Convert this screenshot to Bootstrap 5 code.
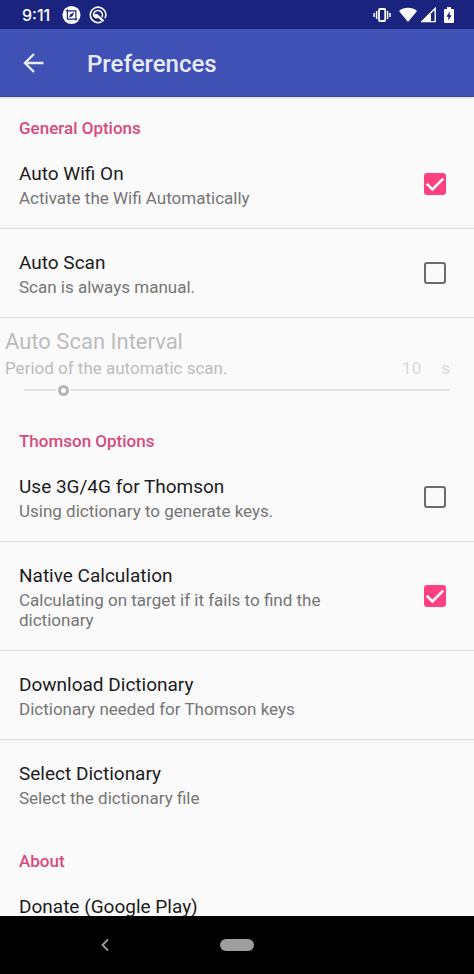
<!DOCTYPE html>
<html lang="en">
<head>
<meta charset="utf-8">
<meta name="viewport" content="width=device-width, initial-scale=1">
<title>Preferences</title>
<link href="https://cdn.jsdelivr.net/npm/bootstrap@5.3.0/dist/css/bootstrap.min.css" rel="stylesheet">
<style>
  body { font-family: Roboto, sans-serif; background: #fafafa; color: #1c1c1c; }
  svg { display: block; }
  .status-bar { background: #1a237e; height: 29px; padding: 0 20px 0 22px; color: #fff; }
  .clock { font: 500 16px/30px Inter, sans-serif; }
  .app-bar { background: #3f51b5; height: 68px; padding: 0 20px; gap: 40px; color: #e8eaf6; border-bottom: 1px solid #3547a3; box-shadow: 0 1px 2px #0002; z-index: 1; }
  .app-title { font-size: 24px; font-weight: 500; line-height: 28px; padding-top: 2px; }
  .prefs { overflow-y: auto; scrollbar-width: none; min-height: 0; }
  .prefs::-webkit-scrollbar { display: none; }
  section + section { padding-top: 2px; }
  .section-title { font-size: 17px; font-weight: 500; line-height: 20px; color: #d84a80; padding: 21px 19px 2px; }
  .pref { padding: 20px 28px 20px 19px; min-height: 88px; gap: 72px; color: inherit; text-align: left; }
  .pref + .pref { border-top: 1px solid #dcdcdc !important; min-height: 89px; }
  .pref-title { font-size: 19px; line-height: 28px; }
  .pref-note { font-size: 17px; line-height: 20px; color: #757575; }
  .pref .form-check-input { width: 22px; height: 22px; border: 2px solid #6b6b6b; border-radius: 3px; background-color: transparent; }
  .pref .form-check-input:checked { background-color: #ff4081; border-color: #ff4081; background-size: 22px; background-image: url("data:image/svg+xml,%3Csvg xmlns='http://www.w3.org/2000/svg' viewBox='0 0 22 22'%3E%3Cpath d='M2.8 10.8l5.6 5.6L19.2 5.6' fill='none' stroke='%23fff' stroke-width='2.6'/%3E%3C/svg%3E"); }
  .interval { border-top: 1px solid #dcdcdc; padding: 11px 24px 9px 5px; color: #bcbcbc; }
  .interval-title { font-size: 22px; line-height: 26px; }
  .interval-text { font-size: 17px; line-height: 26px; }
  .interval-value { color: #d8d8d8; gap: 20px; }
  .interval-range { appearance: none; height: 18px; margin: 0 0 0 19px; background: linear-gradient(#e4e4e4, #e4e4e4) center / 100% 2px no-repeat; }
  .interval-range::-webkit-slider-thumb { appearance: none; width: 11px; height: 11px; border: 3px solid #b4b4b4; border-radius: 50%; background: #fafafa; box-shadow: 0 0 0 2px #fafafa; }
  .nav-bar { background: #000; height: 58px; }
  .nav-back { margin-right: 10px; }
  .home-pill { width: 34px; height: 12px; border-radius: 6px; background: #9e9e9e; }
</style>
<script src="https://cdn.jsdelivr.net/npm/bootstrap@5.3.0/dist/js/bootstrap.bundle.min.js" defer></script>
</head>
<body class="vh-100 d-flex flex-column overflow-hidden">

<div class="status-bar d-flex align-items-center flex-shrink-0">
  <span class="clock">9:11</span>
  <div class="d-flex ps-2 ms-1 gap-2">
    <svg width="19" height="20" viewBox="0 0 20 20" aria-hidden="true"><circle cx="10" cy="10" r="9.5" fill="#fff"/><path d="M4 5.7h10.6v10M5.7 4v10.3H16" fill="none" stroke="#1a237e" stroke-width="1.2"/><path d="M7.5 12.5l1-3 4.4-2.4-1.8 4.3z" fill="#1a237e"/></svg>
    <svg width="18" height="20" viewBox="0 0 20 20" aria-hidden="true"><path d="M14 17.5A8.6 8.6 0 1 1 17.8 13.6" fill="none" stroke="#fff" stroke-width="1.7"/><path d="M5.3 11.5A5 5 0 1 1 14.3 12.6" fill="none" stroke="#fff" stroke-width="1.7"/><path d="M4.6 11C6.6 8 9.5 8.2 11 10.5L17 16l-1.6 1.8-5.3-4.7c-2 1.4-4.4.6-5.5-2.1z" fill="#fff"/></svg>
  </div>
  <div class="d-flex align-items-center ms-auto">
    <svg width="18" height="16" viewBox="0 0 18 16" aria-hidden="true"><rect x="6" y="2" width="6.2" height="12" rx="1" fill="none" stroke="#fff" stroke-width="1.8"/><path d="M3.6 4v8M14.6 4v8" stroke="#fff" stroke-width="1.5"/><path d="M1.1 6v4M17 6v4" stroke="#fff" stroke-width="1.5"/></svg>
    <svg class="ms-2" width="18" height="16" viewBox="0 0 18 16" aria-hidden="true"><path d="M0 4C5-.3 13-.3 18 4L9 15z" fill="#fff"/></svg>
    <svg class="ms-1" width="15" height="16" viewBox="0 0 15 16" aria-hidden="true"><path d="M14.2 1.4v13.2H1z" fill="none" stroke="#fff" stroke-width="1.4"/><path d="M10 5v10H0z" fill="#fff"/></svg>
    <svg class="ms-2" width="10" height="16" viewBox="0 0 10 16" aria-hidden="true"><path d="M3 0h4v2h2q1 0 1 1v12q0 1-1 1H1q-1 0-1-1V3q0-1 1-1h2z" fill="#fff"/><path d="M5.7 4.5L2.3 9.7h2v3.8l3.4-5.2h-2z" fill="#1a237e"/></svg>
  </div>
</div>

<header class="app-bar d-flex align-items-center flex-shrink-0 position-relative">
  <button type="button" class="btn border-0 p-0" aria-label="Back">
    <svg width="27" height="28" viewBox="0 0 27 28"><path d="M23.5 14H6M14 5L5 14l9 9" fill="none" stroke="#e8eaf6" stroke-width="2.4"/></svg>
  </button>
  <h1 class="app-title m-0">Preferences</h1>
</header>

<main class="prefs flex-grow-1">
  <section>
    <h2 class="section-title m-0">General Options</h2>
    <label class="pref d-flex align-items-center justify-content-between">
      <span><span class="pref-title d-block">Auto Wifi On</span><span class="pref-note d-block">Activate the Wifi Automatically</span></span>
      <input class="form-check-input m-0 flex-shrink-0" type="checkbox" checked>
    </label>
    <label class="pref d-flex align-items-center justify-content-between">
      <span><span class="pref-title d-block">Auto Scan</span><span class="pref-note d-block">Scan is always manual.</span></span>
      <input class="form-check-input m-0 flex-shrink-0" type="checkbox">
    </label>
    <div class="interval d-flex flex-column">
      <label class="interval-title" for="interval">Auto Scan Interval</label>
      <div class="interval-text d-flex justify-content-between">
        <span>Period of the automatic scan.</span>
        <span class="interval-value d-flex"><output for="interval">10</output><span>s</span></span>
      </div>
      <input class="interval-range" type="range" id="interval" min="1" max="110" value="10" disabled>
    </div>
  </section>

  <section>
    <h2 class="section-title m-0">Thomson Options</h2>
    <label class="pref d-flex align-items-center justify-content-between">
      <span><span class="pref-title d-block">Use 3G/4G for Thomson</span><span class="pref-note d-block">Using dictionary to generate keys.</span></span>
      <input class="form-check-input m-0 flex-shrink-0" type="checkbox">
    </label>
    <label class="pref d-flex align-items-center justify-content-between">
      <span><span class="pref-title d-block">Native Calculation</span><span class="pref-note d-block">Calculating on target if it fails to find the dictionary</span></span>
      <input class="form-check-input m-0 flex-shrink-0" type="checkbox" checked>
    </label>
    <button type="button" class="pref d-block w-100 border-0 bg-transparent">
      <span class="pref-title d-block">Download Dictionary</span><span class="pref-note d-block">Dictionary needed for Thomson keys</span>
    </button>
    <button type="button" class="pref d-block w-100 border-0 bg-transparent">
      <span class="pref-title d-block">Select Dictionary</span><span class="pref-note d-block">Select the dictionary file</span>
    </button>
  </section>

  <section>
    <h2 class="section-title m-0">About</h2>
    <button type="button" class="pref d-flex align-items-start w-100 border-0 bg-transparent">
      <span class="pref-title">Donate (Google Play)</span>
    </button>
  </section>
</main>

<nav class="nav-bar row g-0 align-items-center flex-shrink-0" aria-label="System">
  <div class="col d-flex justify-content-center">
    <button type="button" class="nav-back btn border-0 p-0" aria-label="Back"><svg width="10" height="14" viewBox="0 0 10 14"><path d="M8 1.5L2.5 7 8 12.5" fill="none" stroke="#9e9e9e" stroke-width="1.8"/></svg></button>
  </div>
  <div class="col-auto"><button type="button" class="home-pill d-block border-0 p-0" aria-label="Home"></button></div>
  <div class="col"></div>
</nav>
</body>
</html>
